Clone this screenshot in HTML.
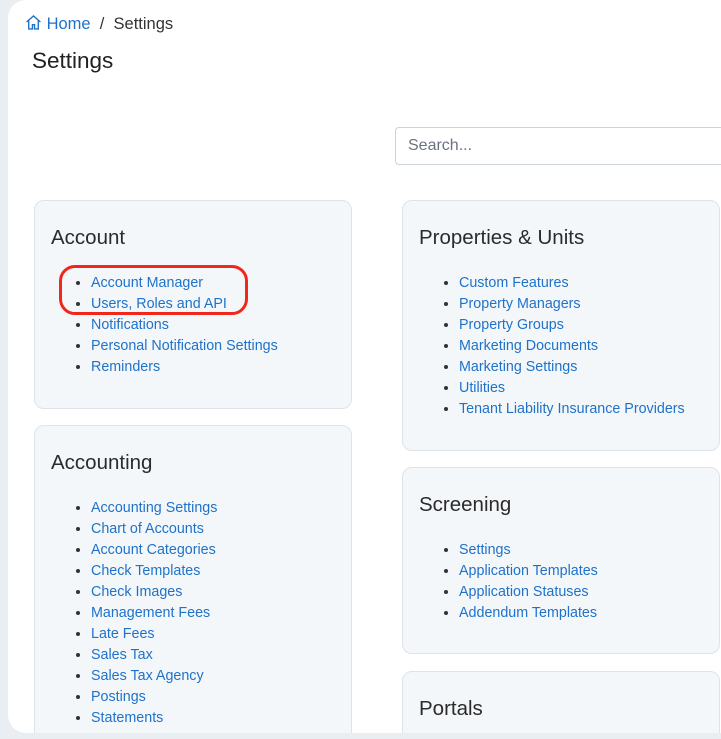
<!DOCTYPE html>
<html><head><style>
*{box-sizing:border-box;margin:0;padding:0}
html,body{width:721px;height:739px;overflow:hidden}
body{background:#e9eef2;font-family:"Liberation Sans",sans-serif;position:relative}
.panel{position:absolute;left:8px;top:0;width:740px;height:733px;background:#fff;border-radius:18px 0 0 18px;overflow:hidden}
.bc{position:absolute;left:17px;top:14px;font-size:16.5px;color:#333}
.bc a{color:#1f72c9;text-decoration:none}
.h1{position:absolute;left:24px;top:48px;font-size:22.5px;color:#222}
.search{position:absolute;left:387px;top:127px;width:360px;height:38px;border:1px solid #cdd3da;border-radius:4px;padding:9px 12px;font-size:16px;color:#6b7280}
.card{position:absolute;background:#f4f7fa;border:1px solid #dde3e9;border-radius:10px;padding:25px 16px;overflow:hidden}
.card h2{font-weight:normal;font-size:20.5px;color:#2b2b2b;margin-bottom:23px}
.card ul{margin-left:40px;list-style:disc;color:#333}
.card li{font-size:14.3px;line-height:21px}
.card li span{color:#1f72c9}
.oval{position:absolute;left:59px;top:265px;width:189px;height:50px;border:3px solid #f0281c;border-radius:16px}
</style></head><body>
<div class="panel">
<div class="bc"><svg width="17" height="16" viewBox="0 0 16 15" style="vertical-align:-1px"><path d="M1.5 7.5L8 1.8l6.5 5.7M3.5 6V14h3.5v-4h2v4h3.5V6" fill="none" stroke="#1f72c9" stroke-width="1.3"/></svg> <a>Home</a> &nbsp;/&nbsp; Settings</div>
<div class="h1">Settings</div>
<div class="search">Search...</div>
<div class="card" style="left:26px;top:200px;width:318px;height:209px"><h2>Account</h2><ul>
<li><span>Account Manager</span></li><li><span>Users, Roles and API</span></li><li><span>Notifications</span></li><li><span>Personal Notification Settings</span></li><li><span>Reminders</span></li></ul></div>
<div class="card" style="left:26px;top:425px;width:318px;height:340px"><h2>Accounting</h2><ul>
<li><span>Accounting Settings</span></li><li><span>Chart of Accounts</span></li><li><span>Account Categories</span></li><li><span>Check Templates</span></li><li><span>Check Images</span></li><li><span>Management Fees</span></li><li><span>Late Fees</span></li><li><span>Sales Tax</span></li><li><span>Sales Tax Agency</span></li><li><span>Postings</span></li><li><span>Statements</span></li><li><span>Tax Documents</span></li></ul></div>
<div class="card" style="left:394px;top:200px;width:318px;height:251px"><h2>Properties &amp; Units</h2><ul>
<li><span>Custom Features</span></li><li><span>Property Managers</span></li><li><span>Property Groups</span></li><li><span>Marketing Documents</span></li><li><span>Marketing Settings</span></li><li><span>Utilities</span></li><li><span>Tenant Liability Insurance Providers</span></li></ul></div>
<div class="card" style="left:394px;top:467px;width:318px;height:187px"><h2>Screening</h2><ul>
<li><span>Settings</span></li><li><span>Application Templates</span></li><li><span>Application Statuses</span></li><li><span>Addendum Templates</span></li></ul></div>
<div class="card" style="left:394px;top:671px;width:318px;height:100px"><h2>Portals</h2></div>
</div>
<div class="oval"></div>
</body></html>
